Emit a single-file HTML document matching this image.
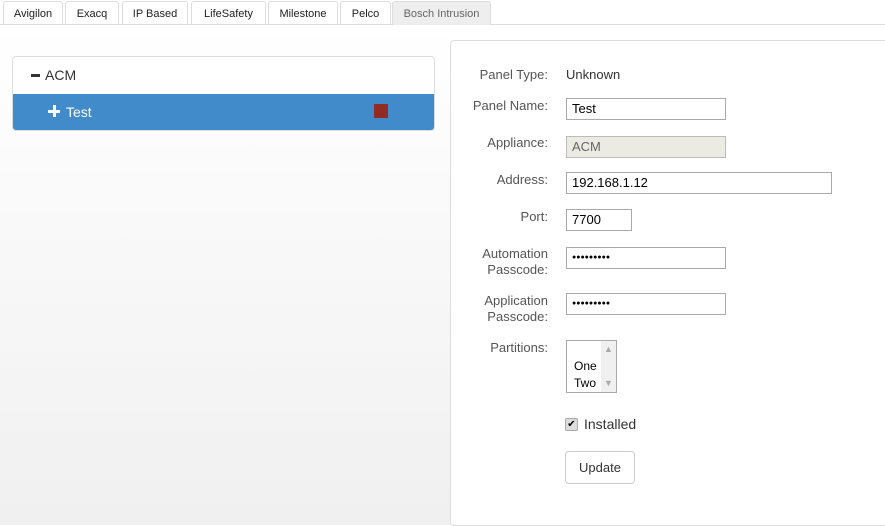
<html><head><style>
body{margin:0;width:885px;height:525px;overflow:hidden;font-family:"Liberation Sans",sans-serif;background:#fff;position:relative}
.a{position:absolute}
.tab{position:absolute;top:1px;height:22px;border:1px solid #ddd;border-bottom:none;border-radius:3px 3px 0 0;font-size:11px;color:#222;text-align:center;line-height:24px;background:#fff}
.lbl{position:absolute;right:337px;font-size:13px;color:#555;text-align:right;line-height:16px}
.in{position:absolute;left:566px;border:1px solid #aaa;font-size:13px;line-height:20px;padding-left:5px;box-sizing:border-box;height:22px;color:#000;background:#fff}
.pw{font-size:7px;letter-spacing:0px;line-height:20px}
</style></head><body>
<div class="a" style="left:0;top:24px;width:885px;height:1px;background:#ddd"></div>
<div class="tab" style="left:3px;width:58px">Avigilon</div>
<div class="tab" style="left:65px;width:52px">Exacq</div>
<div class="tab" style="left:122px;width:64px">IP Based</div>
<div class="tab" style="left:191px;width:73px">LifeSafety</div>
<div class="tab" style="left:268px;width:68px">Milestone</div>
<div class="tab" style="left:340px;width:49px">Pelco</div>
<div class="tab" style="left:392px;width:97px;background:#eee;color:#666;height:23px">Bosch Intrusion</div>
<div class="a" style="left:0;top:25px;width:450px;height:500px;background:linear-gradient(#fff,#f0f0f0)"></div>
<div class="a" style="left:12px;top:56px;width:421px;height:73px;border:1px solid #ddd;border-radius:4px;background:#fff;overflow:hidden">
 <div class="a" style="left:18px;top:17px;width:9px;height:3px;background:#333"></div>
 <div class="a" style="left:32px;top:10px;font-size:14px;color:#333">ACM</div>
 <div class="a" style="left:0;top:37px;width:421px;height:36px;background:#428bca">
  <div class="a" style="left:35px;top:16px;width:12px;height:3px;background:#fff"></div>
  <div class="a" style="left:40px;top:11px;width:3px;height:12px;background:#fff"></div>
  <div class="a" style="left:53px;top:10px;font-size:14px;color:#fff">Test</div>
  <div class="a" style="left:361px;top:10px;width:14px;height:14px;background:#922b21"></div>
 </div>
</div>
<div class="a" style="left:450px;top:40px;width:440px;height:484px;border:1px solid #ddd;border-radius:4px;background:#fff"></div>
<div class="lbl" style="top:67px">Panel Type:</div><div class="a" style="left:566px;top:67px;font-size:13px;color:#333">Unknown</div>
<div class="lbl" style="top:98px">Panel Name:</div><div class="in" style="top:98px;width:160px">Test</div>
<div class="lbl" style="top:135px">Appliance:</div><div class="in" style="top:136px;width:160px;background:#ebebe4;color:#666;border-color:#bbb">ACM</div>
<div class="lbl" style="top:172px">Address:</div><div class="in" style="top:172px;width:266px">192.168.1.12</div>
<div class="lbl" style="top:209px">Port:</div><div class="in" style="top:209px;width:66px">7700</div>
<div class="lbl" style="top:246px">Automation<br>Passcode:</div><div class="in pw" style="top:247px;width:160px">●●●●●●●●●</div>
<div class="lbl" style="top:293px">Application<br>Passcode:</div><div class="in pw" style="top:293px;width:160px">●●●●●●●●●</div>
<div class="lbl" style="top:340px">Partitions:</div>
<div class="a" style="left:566px;top:340px;width:49px;height:51px;border:1px solid #aaa;background:#fff">
 <div class="a" style="left:34px;top:0;width:15px;height:51px;background:#f0f0f0"></div>
 <div class="a" style="left:37px;top:3px;font-size:9px;color:#aaa">▲</div>
 <div class="a" style="left:37px;top:37px;font-size:9px;color:#aaa">▼</div>
 <div class="a" style="left:7px;top:17px;font-size:12px;line-height:17px;color:#000">One<br>Two</div>
</div>
<div class="a" style="left:565px;top:418px;width:11px;height:11px;border:1px solid #aaa;border-radius:2px;background:#ddd;font-size:10px;line-height:11px;text-align:center">✔</div>
<div class="a" style="left:584px;top:416px;font-size:14px;color:#333">Installed</div>
<div class="a" style="left:565px;top:451px;width:68px;height:31px;border:1px solid #ccc;border-radius:4px;font-size:13px;color:#333;text-align:center;line-height:31px">Update</div>
</body></html>
